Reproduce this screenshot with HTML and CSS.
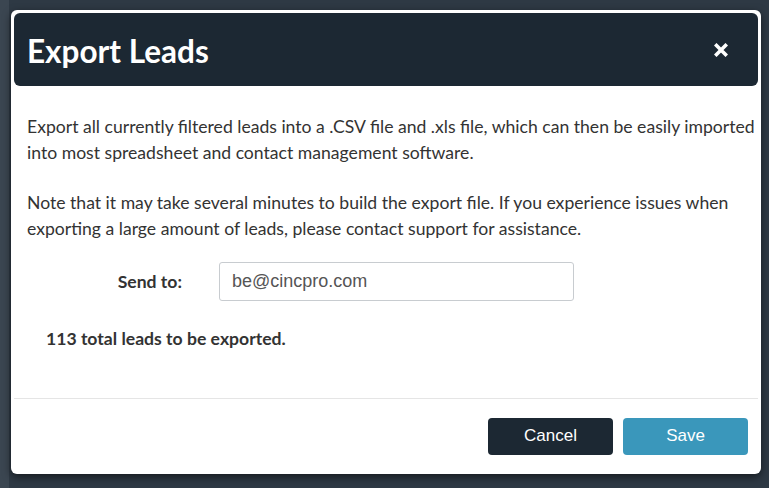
FILE: index.html
```html
<!DOCTYPE html>
<html>
<head>
<meta charset="utf-8">
<link rel="stylesheet" href="styles.css">
</head>
<body>
<div class="backdrop">
  <div class="modal">
    <div class="modal-header">
      <h1 class="modal-title">Export Leads</h1>
      <button class="close" aria-label="Close">
        <svg width="14" height="14" viewBox="0 0 14 14"><path d="M2.5 2.5 L11.5 11.5 M11.5 2.5 L2.5 11.5" stroke="#fff" stroke-width="3.6" stroke-linecap="square"/></svg>
      </button>
    </div>
    <div class="modal-body">
      <p class="para">Export all currently filtered leads into a .CSV file and .xls file, which can then be easily imported into most spreadsheet and contact management software.</p>
      <p class="para">Note that it may take several minutes to build the export file. If you experience issues when exporting a large amount of leads, please contact support for assistance.</p>
      <div class="form-row">
        <label class="form-label">Send to:</label>
        <input class="form-input" type="text" value="be@cincpro.com">
      </div>
      <p class="total">113 total leads to be exported.</p>
    </div>
    <div class="modal-footer">
      <button class="btn btn-cancel">Cancel</button>
      <button class="btn btn-save">Save</button>
    </div>
  </div>
</div>
</body>
</html>
```
FILE: styles.css
```css
html, body {
  margin: 0;
  padding: 0;
}
body {
  width: 769px;
  height: 488px;
  overflow: hidden;
  background: linear-gradient(to right, #3b4651 0, #3b4651 9px, #2e3944 9px, #2e3944 100%);
  font-family: "Lato", "Liberation Sans", sans-serif;
}
.backdrop {
  padding: 10px 0 0 11px;
}
.modal {
  width: 744px;
  background: #fff;
  border-radius: 6px;
  padding: 3px;
  box-shadow: 0 3px 8px rgba(0, 0, 0, 0.55);
}
.modal-header {
  height: 73px;
  background: #1c2833;
  border-radius: 6px;
  display: flex;
  align-items: center;
  justify-content: space-between;
  padding: 0 30px 0 13px;
}
.modal-title {
  margin: 4px 0 0 0;
  color: #fff;
  font-family: "Lato", sans-serif;
  font-weight: 700;
  font-size: 31.5px;
  line-height: 1;
}
.close {
  background: none;
  border: 0;
  padding: 0;
  margin: 0;
  width: 14px;
  height: 14px;
  display: block;
  cursor: pointer;
}
.close svg {
  display: block;
}
.modal-body {
  padding: 28px 0 0 13px;
  color: #333;
  font-size: 17.6px;
  line-height: 25.5px;
  display: flex;
  flex-direction: column;
}
.para {
  margin: 0;
}
.para + .para {
  margin-top: 25px;
}
.form-row {
  display: flex;
  align-items: center;
  margin-top: 21px;
}
.form-label {
  width: 155px;
  text-align: right;
  font-weight: 700;
  color: #333;
  margin-right: 37px;
}
.form-input {
  box-sizing: border-box;
  width: 355px;
  height: 39px;
  border: 1px solid #c8ccd0;
  border-radius: 3px;
  padding: 0 12px;
  font-family: "Liberation Sans", Arial, sans-serif;
  font-size: 18px;
  color: #555;
  background: #fff;
}
.total {
  margin: 25px 0 0 19px;
  font-weight: 700;
  color: #333;
}
.modal-footer {
  margin-top: 46px;
  border-top: 1px solid #e5e5e5;
  display: flex;
  justify-content: flex-end;
  gap: 10px;
  padding: 19px 10px 16px 0;
}
.btn {
  width: 125px;
  height: 37px;
  border: 0;
  border-radius: 4px;
  color: #fff;
  font-family: "Liberation Sans", Arial, sans-serif;
  font-size: 17px;
  padding: 0;
}
.btn-cancel {
  background: #1c2833;
}
.btn-save {
  background: #3a97bb;
}
```
